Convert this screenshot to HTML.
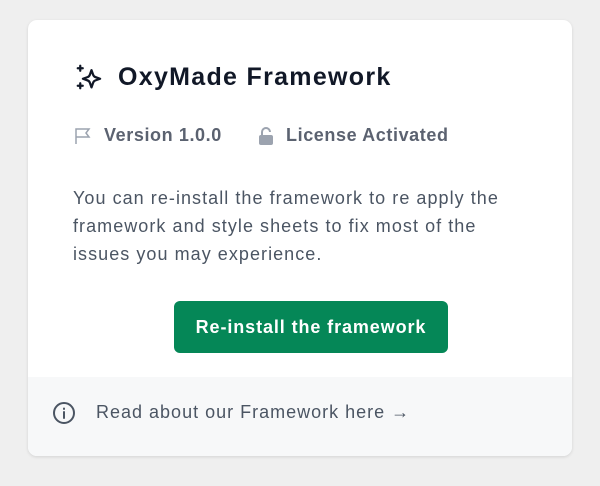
<!DOCTYPE html>
<html><head><style>
*{margin:0;padding:0;box-sizing:border-box}
body{width:600px;height:486px;background:#efefef;font-family:"Liberation Sans",sans-serif;position:relative;overflow:hidden}
.card{position:absolute;left:28px;top:20px;width:544px;height:436px;background:#fff;border-radius:9px;box-shadow:0 1px 3px rgba(0,0,0,.12);overflow:hidden}
.t{position:absolute;left:90px;top:43px;font-size:25px;font-weight:700;color:#111827;letter-spacing:1.3px}
.meta{position:absolute;top:105px;font-size:18px;font-weight:700;color:#5b6270;letter-spacing:0.6px}
p{position:absolute;left:45px;top:164px;width:445px;font-size:18px;line-height:28px;color:#4b5563;letter-spacing:1.05px}
.btn{position:absolute;left:146px;top:281px;width:274px;height:52px;background:#058757;border-radius:6px;color:#fff;font-size:18px;font-weight:700;text-align:center;line-height:52px;letter-spacing:0.9px}
.foot{position:absolute;left:0;top:357px;width:544px;height:79px;background:#f7f8f9}
.ft{position:absolute;left:68px;top:25px;font-size:18px;color:#4b5563;letter-spacing:1px}
</style></head><body>
<div class="card">
<svg style="position:absolute;left:46px;top:42px" width="30" height="30" viewBox="0 0 24 24" fill="none" stroke="#111827" stroke-width="1.8" stroke-linecap="round" stroke-linejoin="round"><path d="M14 6.5l1.3 3.7a3 3 0 0 0 1.9 1.9l3.7 1.3-3.7 1.3a3 3 0 0 0-1.9 1.9L14 20.3l-1.3-3.7a3 3 0 0 0-1.9-1.9L7.1 13.4l3.7-1.3a3 3 0 0 0 1.9-1.9z"/><path d="M5 3v4M3 5h4M5 17v4M3 19h4"/></svg>
<div class="t">OxyMade Framework</div>
<svg style="position:absolute;left:45px;top:106px" width="20" height="20" viewBox="0 0 20 20" fill="none" stroke="#9ca3af" stroke-width="1.5"><path d="M3 18V3h13l-3 4 3 4H3"/></svg>
<div class="meta" style="left:76px">Version 1.0.0</div>
<svg style="position:absolute;left:229px;top:106px" width="18" height="20" viewBox="0 0 18 20"><path d="M5 9V6a4 4 0 0 1 8 0" fill="none" stroke="#9ca3af" stroke-width="2"/><rect x="2" y="9" width="14" height="10" rx="2" fill="#9ca3af"/></svg>
<div class="meta" style="left:258px">License Activated</div>
<p>You can re-install the framework to re apply the framework and style sheets to fix most of the issues you may experience.</p>
<div class="btn">Re-install the framework</div>
<div class="foot">
<svg style="position:absolute;left:24px;top:24px" width="24" height="24" viewBox="0 0 24 24" fill="none" stroke="#4b5563" stroke-width="2" stroke-linecap="round"><circle cx="12" cy="12" r="10"/><path d="M12 11v6M12 7.5v.5"/></svg>
<div class="ft">Read about our Framework here →</div>
</div>
</div>
</body></html>
